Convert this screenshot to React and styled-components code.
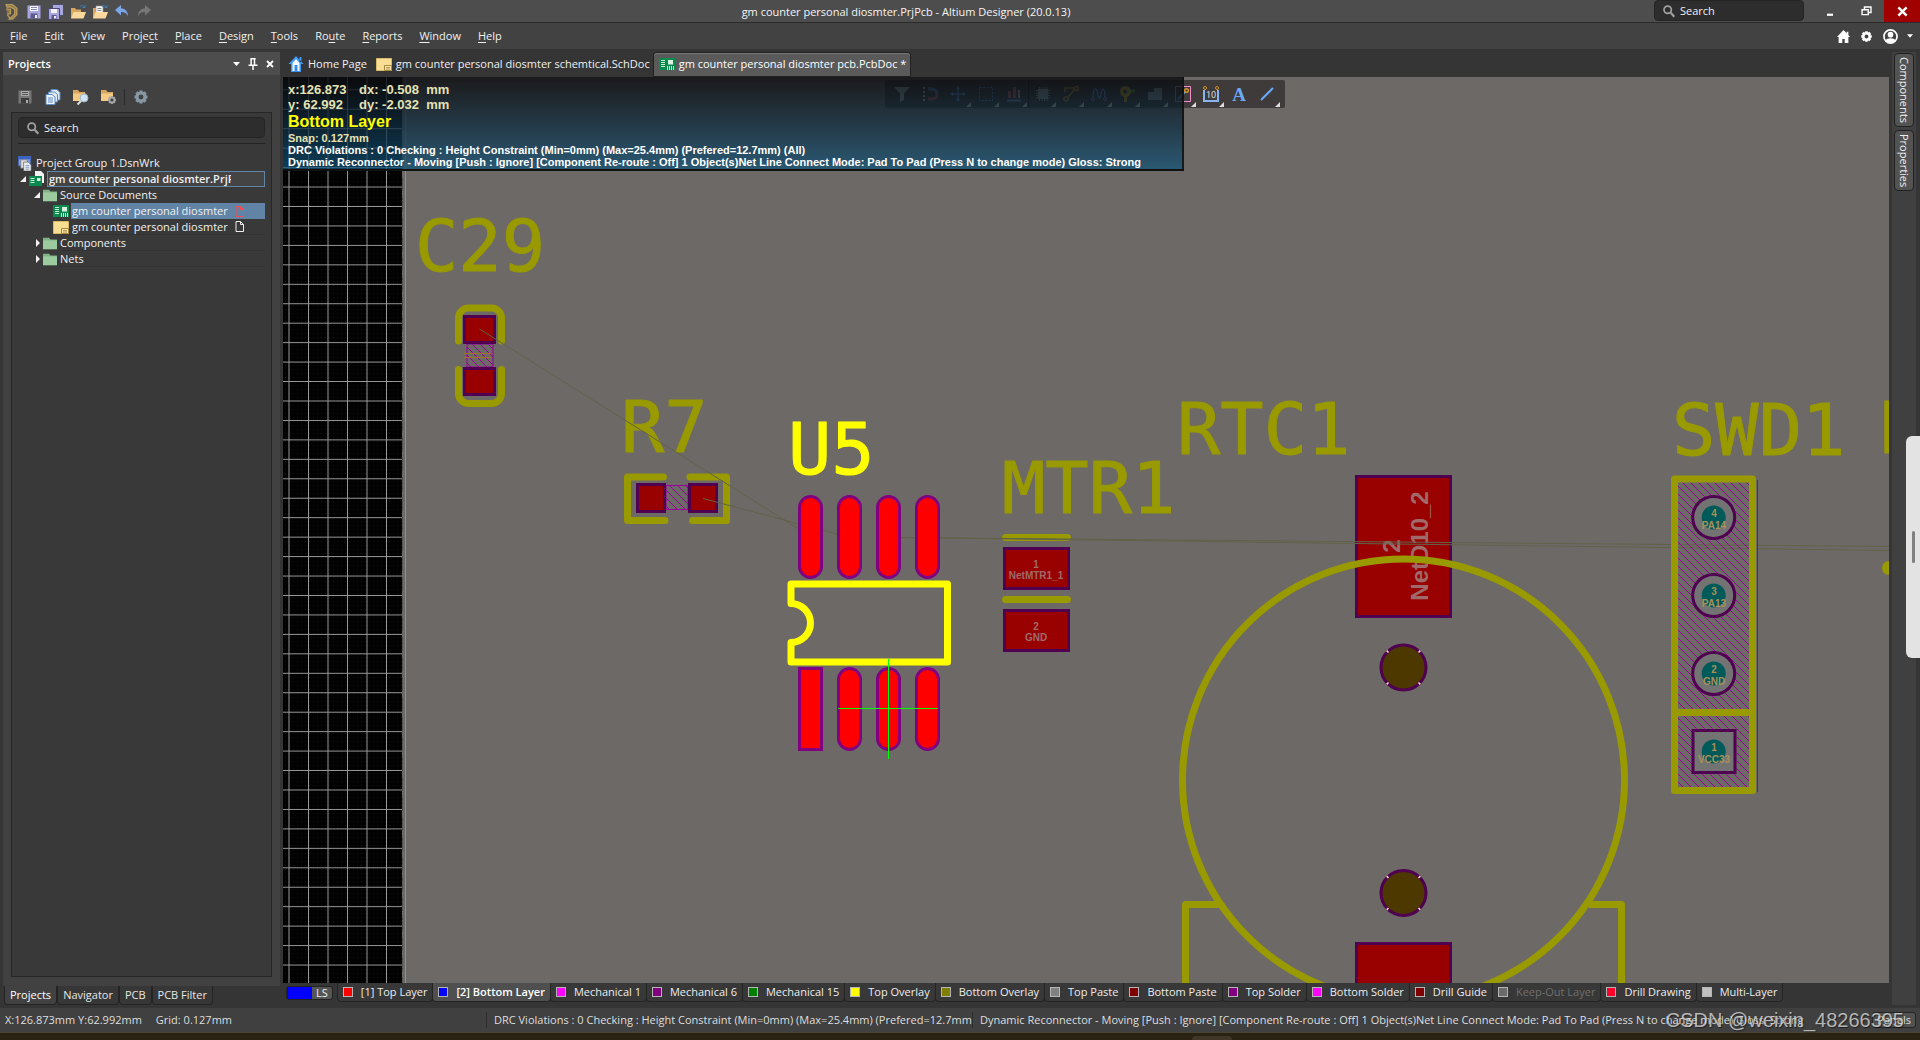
import React from "react";
import styled, { createGlobalStyle, css } from "styled-components";

const UI = `"Open Sans", "Noto Sans", sans-serif`;
const ARIAL = `"Liberation Sans", Arial, sans-serif`;
const OLIVE = "#999900";

const Global = createGlobalStyle`
  *, *::before, *::after { box-sizing: border-box; }
  body { margin: 0; background: #353535; color: #f0f0f0; font: 11px/16px ${UI}; overflow: hidden; }
  button, input { font: inherit; color: inherit; margin: 0; }
  button { background: none; border: 0; padding: 0; white-space: nowrap; }
  ul { list-style: none; margin: 0; padding: 0; }
  svg { display: block; flex: none; }
`;

/* ---------- shell ---------- */
const Shell = styled.div`
  position: relative;
  display: grid;
  grid-template-rows: 23px 26px minmax(0, 1fr) 25px 7px;
  height: 100vh;
`;
const TitleBar = styled.header`
  display: grid;
  grid-template-columns: 1fr auto 1fr;
  background: #4d4d4d;
  border-bottom: 1px solid #2b2b2b;
`;
const QuickBar = styled.div`
  display: flex;
  align-items: center;
  gap: 6px;
  padding-left: 3px;
`;
const IconButton = styled.button`
  display: grid;
  place-items: center;
  width: ${(p) => p.$w || 16}px;
  height: 16px;
`;
const AppTitle = styled.h1`
  margin: 0;
  font-size: 11px;
  font-weight: 400;
  line-height: 23px;
  color: #f4f4f4;
  padding-right: 108px;
`;
const TitleRight = styled.div`
  display: flex;
  justify-content: flex-end;
  > label { margin-right: 8px; }
`;
const SearchField = styled.label`
  display: flex;
  align-items: center;
  gap: 4px;
  width: ${(p) => p.$width};
  height: 21px;
  padding: 0 7px;
  background: #2d2d2d;
  border: 1px solid #252525;
  border-radius: 4px;
  input {
    flex: 1;
    min-width: 0;
    padding: 0;
    border: 0;
    outline: 0;
    background: none;
    &::placeholder { color: #f0f0f0; opacity: 1; }
  }
`;
const WindowButton = styled.button`
  display: grid;
  place-items: center;
  width: 36px;
  height: 22px;
  ${(p) => p.$close && css`background: #a00000;`}
`;
const MenuBar = styled.nav`
  display: flex;
  align-items: center;
  background: #424242;
  padding: 0 7px 0 10px;
`;
const Menus = styled.ul`
  display: flex;
  gap: 17px;
  flex: 1;
  u { text-underline-offset: 2px; }
`;
const AccountTools = styled.div`
  display: flex;
  align-items: center;
  gap: 7px;
`;
const Workspace = styled.div`
  display: grid;
  grid-template-columns: 277px minmax(0, 1fr) 24px;
  padding: 3px 4px 0 3px;
`;

/* ---------- projects panel ---------- */
const SideColumn = styled.aside`
  display: flex;
  flex-direction: column;
  min-height: 0;
`;
const Panel = styled.section`
  flex: 1;
  min-height: 0;
  display: flex;
  flex-direction: column;
  background: #414141;
`;
const PanelHeader = styled.div`
  display: flex;
  align-items: center;
  gap: 5px;
  height: 23px;
  padding: 0 5px;
  background: #4d4d4d;
  h2 { flex: 1; margin: 0; font-size: 11px; font-weight: 600; color: #fff; }
`;
const PanelTools = styled.div`
  display: flex;
  align-items: center;
  gap: 12px;
  height: 37px;
  padding: 7px 14px 0;
`;
const Divider = styled.span`
  width: 1px;
  height: 16px;
  margin: 0 -4px 0 -5px;
  background: #2a2a2a;
`;
const TreeBox = styled.div`
  flex: 1;
  margin: 0 8px 9px;
  padding: 4px 6px;
  background: #393939;
  border: 1px solid #262626;
`;
const Tree = styled.ul`
  margin-top: 5px;
  padding-top: 11px;
  border-top: 1px solid #232323;
`;
const Row = styled.li`
  display: flex;
  align-items: center;
  height: 16px;
  gap: 2px;
  padding-left: ${(p) => p.$indent}px;
`;
const RowName = styled.span`
  flex: 1;
  min-width: 0;
  height: 16px;
  display: flex;
  align-items: center;
  gap: 6px;
  padding-left: 1px;
  font-weight: ${(p) => (p.$bold ? 600 : 400)};
  ${(p) => p.$line && css`border-bottom: 1px solid #323232;`}
  ${(p) => p.$boxed && css`background: #444; border: 1px solid #6284a5; line-height: 14px;`}
  ${(p) => p.$selected && css`background: #6183a5;`}
`;
const Clip = styled.span`
  width: ${(p) => p.$w}px;
  overflow: hidden;
  white-space: nowrap;
`;
const PanelTabs = styled.div`
  display: flex;
  height: 22px;
  align-items: flex-start;
  padding-left: 1px;
`;
const PanelTab = styled.button`
  height: 19px;
  padding: 0 5px;
  border: 1px solid #242424;
  border-top: 0;
  border-radius: 0 0 4px 4px;
  background: ${(p) => (p.$active ? "#414141" : "#373737")};
  color: ${(p) => (p.$active ? "#fff" : "#e6e6e6")};
`;

/* ---------- editor ---------- */
const Editor = styled.main`
  display: flex;
  flex-direction: column;
  min-width: 0;
  min-height: 0;
  padding: 0 3px;
`;
const DocTabs = styled.div`
  display: flex;
  height: 25px;
  padding: 1px 0;
`;
const DocTab = styled.button`
  display: flex;
  align-items: center;
  gap: 4px;
  padding: 0 4px 1px 5px;
  border-radius: 3px 3px 0 0;
  ${(p) => p.$active && css`background: #5a5a5a; box-shadow: inset 0 1px #777, 0 0 0 1px #222; color: #fff;`}
`;
const Canvas = styled.div`
  position: relative;
  flex: 1;
  min-height: 0;
  overflow: hidden;
  background: #6d6967;
`;
const Board = styled.svg`
  width: 100%;
  height: 100%;
`;
const ActiveBar = styled.div`
  position: absolute;
  top: 3px;
  left: 602px;
  display: flex;
  padding: 0 4px 0 3px;
  background: rgba(56, 54, 53, 0.9);
  border-radius: 2px;
`;
const ToolButton = styled.button`
  position: relative;
  display: grid;
  place-items: center;
  width: 28px;
  height: 28px;
  ${(p) => p.$group && css`margin-left: 1px; box-shadow: -1px 0 #222;`}
  ${(p) => p.$menu && css`
    &::after {
      content: "";
      position: absolute;
      right: 1px;
      bottom: 1px;
      border-left: 5px solid transparent;
      border-bottom: 5px solid #ddd;
    }
  `}
`;
const HeadsUp = styled.div`
  position: absolute;
  top: 0;
  left: 0;
  width: 901px;
  padding: 5px 5px 1px;
  background: linear-gradient(rgba(12, 12, 14, 0.85), rgba(15, 42, 60, 0.78) 50%, rgba(18, 82, 118, 0.74));
  border: solid rgba(16, 16, 16, 0.85);
  border-width: 0 2px 2px 0;
  font-family: ${ARIAL};
  font-weight: 700;
  color: #fff;
  white-space: nowrap;
`;
const Coords = styled.dl`
  display: grid;
  grid-template-columns: 71px auto;
  justify-content: start;
  margin: 0;
  font-size: 13px;
  line-height: 15px;
  color: #e6e2b4;
  dd { margin: 0; }
`;
const HudLine = styled.div`
  font-size: ${(p) => p.$size || 11}px;
  line-height: ${(p) => p.$lh || 12}px;
  color: ${(p) => p.$color || "#fff"};
`;
const LayerBar = styled.div`
  display: flex;
  height: 25px;
  align-items: flex-start;
  padding-left: 3px;
`;
const LayerSet = styled.button`
  display: flex;
  align-items: center;
  height: 14px;
  margin: 3px 5px 0 0;
  padding-right: 4px;
  gap: 4px;
  border: 1px solid #222;
  border-radius: 3px;
  background: #555;
  line-height: 14px;
  &::before { content: ""; width: 25px; height: 12px; background: #0000ff; }
`;
const LayerTab = styled.button`
  display: flex;
  align-items: center;
  gap: 8px;
  height: 19px;
  margin-left: -1px;
  padding: 0 5px 1px;
  border: 1px solid #242424;
  border-top: 0;
  border-radius: 0 0 4px 4px;
  background: ${(p) => (p.$active ? "#4f4f4f" : "#383838")};
  font-weight: ${(p) => (p.$active ? 600 : 400)};
  color: ${(p) => (p.$active ? "#fff" : p.$off ? "#6f6f6f" : "#ececec")};
  &::before {
    content: "";
    width: 10px;
    height: 10px;
    background: ${(p) => p.$color};
    border: 1px solid #b5b5b5;
  }
`;
const Dock = styled.div`
  display: flex;
  flex-direction: column;
  gap: 3px;
  align-items: center;
  margin-bottom: 3px;
  padding-top: 1px;
  background: #404040;
`;
const DockTab = styled.button`
  writing-mode: vertical-rl;
  width: 20px;
  padding: 3px 0;
  line-height: 18px;
  background: #535353;
  border: 1px solid #212121;
  border-radius: 4px;
`;
const DrawerHandle = styled.button`
  position: absolute;
  right: 0;
  top: 436px;
  width: 14px;
  height: 222px;
  display: grid;
  place-items: center;
  background: #e3e3e3;
  border-radius: 6px 0 0 6px;
  &::before { content: ""; width: 3px; height: 32px; border-radius: 2px; background: #808080; }
`;

/* ---------- status ---------- */
const StatusBar = styled.footer`
  display: flex;
  align-items: center;
  padding: 0 4px 0 5px;
  background: #404040;
  border-bottom: 1px solid #4a4433;
  white-space: nowrap;
  color: #dedede;
`;
const StatusCell = styled.div`
  overflow: hidden;
  flex: ${(p) => (p.$w ? `0 0 ${p.$w}px` : 1)};
  ${(p) => p.$ruled && css`border-left: 1px solid #2e2e2e; padding-left: 7px;`}
  span + span { margin-left: 14px; }
`;
const PanelsButton = styled.button`
  height: 16px;
  padding: 0 4px;
  line-height: 14px;
  background: #525252;
  border: 1px solid #252525;
  border-radius: 3px;
`;
const DeskStrip = styled.div`
  display: flex;
  justify-content: center;
  align-items: flex-end;
  background: #2a2314;
  padding-left: 504px;
  &::before { content: ""; width: 40px; height: 4px; border-radius: 4px 4px 0 0; background: #403726; }
`;
const Watermark = styled.div`
  position: absolute;
  right: 16px;
  bottom: 8px;
  font: 20px/24px ${ARIAL};
  color: rgba(225, 225, 225, 0.75);
  text-shadow: 1px 1px 1px rgba(0, 0, 0, 0.5);
  pointer-events: none;
`;

/* ---------- icons ---------- */
const I = ({ s = 16, children }) => (
  <svg width={s} height={s} viewBox="0 0 16 16" fill="none" aria-hidden="true">{children}</svg>
);
const Logo = () => (
  <I s={17}>
    <path d="M3 1.5h6L13 5v6l-4 4H6l5-4.5V6L7 3.500 4 4zM3 5.500 7 6v4l-3 .5M4 11l3 4" stroke="#b89a5c" strokeWidth="1.3" fill="#8c7544" />
  </I>
);
const Save = () => (
  <I><path d="M1.5 1.5h13v13h-13z" fill="#a9a5dd" /><path d="M4 2h8v5H4z" fill="#f3f3f8" /><path d="M5 3.5h6M5 5.5h6" stroke="#8b8bb0" /><path d="M4.5 9.5h7v5h-7z" fill="#5b5990" /><path d="M9 11h2v3H9z" fill="#eee" /></I>
);
const SaveGray = () => (
  <I><path d="M1.5 1.5h13v13h-13z" fill="#777" /><path d="M4 2h8v5H4z" fill="#aaa" /><path d="M5 3.5h6M5 5.5h6" stroke="#555" /><path d="M4 9h8v5.5H4z" fill="#3c3c3c" /><path d="M9 11h2v3H9z" fill="#aaa" /></I>
);
const SaveAll = () => (
  <I><path d="M4.5.5h11v11h-11z" fill="#a9a5dd" stroke="#4d4d6b" /><path d="M.5 4.5h11v11H.5z" fill="#a9a5dd" stroke="#4a4870" /><path d="M3 5h6v4H3z" fill="#f3f3f8" /><path d="M3.5 11h5v4h-5z" fill="#5b5990" /><path d="M6 12h2v2.5H6z" fill="#eee" /></I>
);
const OpenFolder = ({ docs }) => (
  <I>
    <path d="M1 14V4h4l1 1.5h5V14z" fill="#d8a860" />
    {docs && <path d="M4 2h7v8H4z" fill="#f5f5f5" stroke="#999" strokeWidth=".6" />}
    {docs && <path d="M5.5 4.5h4M5.5 6.5h4" stroke="#888" />}
    <path d="M3.5 8H16l-2.5 6.5H1z" fill="#fbd89c" />
    <path d="M10 3c1-2 3-2 4 0m1-2v2.5h-2.5" stroke="#3d7fb8" />
  </I>
);
const Undo = () => (
  <I><path d="M7 1v3.2c4.5.3 7 3.3 7 8.3-1.5-3.5-3.5-4.5-7-4.5v3.500L1 6z" fill="#7aa7e8" /></I>
);
const Redo = () => (
  <I><path d="M9 1v3.2c-4.5.3-7 3.3-7 8.3 1.5-3.5 3.5-4.5 7-4.5v3.500L15 6z" fill="#777" /></I>
);
const Search = () => (
  <I s={14}><circle cx="6.5" cy="6.5" r="4.2" stroke="#a0a0a0" strokeWidth="2" /><path d="m10 10 4 4.5" stroke="#a0a0a0" strokeWidth="2.4" /></I>
);
const HomeTab = () => (
  <I><path d="M11.5 1h2v5h-2zM8 0 .5 8H3v8h10V8h2.5z" fill="#4096f0" /><path d="M8 3 4.500 7v8h7V7z" fill="#eef6ff" /><path d="M6.5 9h3v7h-3z" fill="#3d8de8" /></I>
);
const Sch = () => (
  <I><path d="M.5 2.5h15v12H.5z" fill="#f7de92" stroke="#d9b968" /><path d="M8.5 9.5h7v5h-7z" fill="#fbe7a8" stroke="#a8863c" /><path d="M10 11.5h4M10 13h4" stroke="#a8863c" strokeWidth=".8" /></I>
);
const Pcb = () => (
  <I><path d="M0 2h16v12H0z" fill="#0b8a4f" /><path d="M2 4.5h4M2 6.5h4M2 8.5h4M2 10.5h4" stroke="#c9efd5" /><path d="M9 4h5v4.5H9z" fill="#d8f3df" /><path d="M8.5 10v4M10.5 10v4M12.5 10v4M14.5 10v4" stroke="#c9efd5" /></I>
);
const PcbProject = () => (
  <I><path d="M6 0h6l3 3v9H6z" fill="#f2f2f2" /><path d="M0 5h13v10H0z" fill="#0b8a4f" /><path d="M1.5 7.5h4M1.5 9.5h4M1.5 11.5h4" stroke="#c9efd5" /><path d="M8 7h3.5v3H8z" fill="#d8f3df" /></I>
);
const Folder = () => (
  <I s={14}><path d="M0 2h7l1.5 2H16v11H0z" fill="#7fb386" /><path d="M0 5h16v10H0z" fill="#9bcb9f" /></I>
);
const Group = () => (
  <I s={15}><path d="M.5.5h13v10H.5z" fill="#7f9fd8" stroke="#4466b8" /><path d="M.5.5h13v3H.5z" fill="#3a63c8" /><path d="M3 4h7v9H3z" fill="#ddd" stroke="#777" strokeWidth=".7" /><path d="M6 6.5h5l3 3V16H6z" fill="#eee" stroke="#555" strokeWidth=".7" /><path d="M8 10h4M8 12h4M8 14h4" stroke="#5a80c0" strokeWidth=".8" /></I>
);
const Doc = ({ c }) => (
  <svg width="9" height="11" viewBox="0 0 9 11" fill="none" aria-hidden="true"><path d="M1 .5h4.500l3 3v7H1zM5.500.5v3h3" stroke={c} /></svg>
);
const Arrow = ({ open }) => (
  <svg width="7" height="8" viewBox="0 0 7 8" aria-hidden="true"><path d={open ? "M6 1v6H0z" : "M2 0l4 4-4 4z"} fill="#f2f2f2" /></svg>
);
const Copies = () => (
  <I><path d="M6 .5h6l3 3V11H6z" fill="#dfe9f5" stroke="#5b8ac4" /><path d="M3.5 3h6l3 2.500V13h-9z" fill="#dfe9f5" stroke="#5b8ac4" /><path d="M1 5.5h6L10 8v7.500H1z" fill="#eef4fb" stroke="#5b8ac4" /><path d="M3 9h5M3 11h5M3 13h5" stroke="#5b8ac4" /></I>
);
const FolderFind = () => (
  <I><path d="M0 1h5l1.5 2H12v9H0z" fill="#d9a860" /><path d="M0 4.5h13V12H0z" fill="#f3cb84" /><circle cx="11" cy="9" r="4" fill="#cfe3f4" stroke="#9bb4c8" /><path d="m8 12-3.5 3.5" stroke="#ddd" strokeWidth="2" /></I>
);
const teeth = "M8 1.5v13M1.5 8h13M3.4 3.4l9.2 9.2M12.6 3.4l-9.2 9.2";
const FolderGear = () => (
  <I><path d="M0 1h5l1.5 2H12v9H0z" fill="#d9a860" /><path d="M0 4.5h12V12H0z" fill="#f3cb84" /><g transform="translate(6 6) scale(.62)"><path d={teeth} stroke="#999" strokeWidth="3.2" /><circle cx="8" cy="8" r="4" fill="#3d3d3d" stroke="#aaa" strokeWidth="3" /></g></I>
);
const Gear = ({ s, color, hole }) => (
  <I s={s}><path d={teeth} stroke={color} strokeWidth="3.2" /><circle cx="8" cy="8" r="4" fill={hole} stroke={color} strokeWidth="3.2" /></I>
);
const HomeWhite = () => (
  <I s={13}><path d="M8 0 0 8.500h2V16h4.500v-5h3v5H14V8.500h2L14 6V2h-2v2z" fill="#fff" /></I>
);
const User = () => (
  <I s={15}><circle cx="8" cy="8" r="7" stroke="#fff" strokeWidth="1.8" /><circle cx="8" cy="6" r="3" fill="#fff" /><path d="M2.5 12c2-3 9-3 11 0L11 14.500H5z" fill="#fff" /></I>
);
const Caret = ({ w }) => (
  <svg width={w} height="6" viewBox="0 0 10 6" aria-hidden="true"><path d="M0 0h10L5 6z" fill="#fff" /></svg>
);
const Pin = () => (<I s={12}><path d="M4.5 1h7M5.5 1v8M10 1v8M2 9.5h12M8 10v6" stroke="#fff" strokeWidth="2" /></I>);
const Cross = ({ s }) => (<I s={s}><path d="m2 2 12 12M14 2 2 14" stroke="#fff" strokeWidth="3.6" /></I>);

const blue = "#5b9bea";
const tools = [
  ["Filter", false, <path d="M0 1h16l-6 6.500V14l-4 2V7.500z" fill="#a9b9c4" />],
  ["Snapping", false, <><path d="M6 3h4a5 5 0 0 1 0 10H6" stroke="#c45a60" strokeWidth="3" /><path d="M6 3h4a5 5 0 0 1 5 5" stroke="#5a80c8" strokeWidth="3" /><path d="M1 2h2M1 6h2M1 10h2M1 14h2" stroke="#ccc" strokeWidth="2" /></>],
  ["Move", true, <path d="M8 1v14M1 8h14M6.500 3 8 1l1.500 2M6.500 13 8 15l1.500-2M3 6.500 1 8l2 1.500M13 6.500 15 8l-2 1.500" stroke={blue} strokeWidth="1.300" />],
  ["Select", true, <path d="M1.5 1.5h13v13h-13z" stroke={blue} strokeDasharray="2 1.5" />],
  ["Align", true, <><path d="M2 5h3v7H2zM7 1h3v11H7z" fill="#c9666c" /><path d="M12 4h2v8h-2z" fill="#bbb" /><path d="M1 14.5h14" stroke="#7ba0d8" strokeWidth="2" /></>],
  ["Component", true, <><path d="M3 3h10v10H3z" fill="#9fb0b8" /><path d="M1 4.5h14M1 7h14M1 9.5h14M1 12h14M4.5 1v14M7 1v14M9.5 1v14M12 1v14" stroke="#9fb0b8" /></>],
  ["Route", true, <><path d="M2 6V2h9M4 12l8-9" stroke="#c79a28" strokeWidth="1.600" /><circle cx="3" cy="13" r="2" stroke="#c79a28" strokeWidth="1.500" /><circle cx="13.5" cy="2.5" r="2" stroke="#c79a28" strokeWidth="1.500" /></>],
  ["Tune", true, <><path d="M2 12C2 1 6 1 6.500 7s3 7 3.500 1 4-8 4 3" stroke={blue} strokeWidth="1.500" /><circle cx="2" cy="13" r="1.5" stroke="#a08ad0" /><circle cx="14" cy="13" r="1.5" stroke="#a08ad0" /></>],
  ["Via", true, <><path d="M7 5h9" stroke="#58a840" strokeWidth="3" /><circle cx="6.500" cy="5.5" r="3.8" stroke="#d8a820" strokeWidth="3.400" /><path d="M5 10h3v6H5z" fill="#d8a820" /></>],
  ["Polygon", true, <path d="M1 6h6V2h8v12H1z" fill="#93a8b4" />],
  ["Rule", true, <><path d="M.5.5h15v15H.5z" stroke="#f08fd0" /><path d="m3 13 7-7" stroke={blue} strokeWidth="1.800" /><circle cx="11.5" cy="4.5" r="1.8" stroke="#d09020" strokeWidth="1.500" /></>],
  ["Dimension", true, <><path d="M1 4v11h14V4" stroke="#8ab4f0" strokeWidth="2" /><circle cx="2" cy="2" r="1.5" stroke="#d09020" /><circle cx="14" cy="2" r="1.5" stroke="#d09020" /><text x="8" y="12" textAnchor="middle" fontSize="9" fill="#ddd" fontFamily="Roboto, sans-serif">10</text></>],
  ["Text", false, <text x="8" y="15" textAnchor="middle" fontSize="19" fontWeight="700" fill="#6aa8f8" fontFamily="Liberation Serif, serif">A</text>],
  ["Line", true, <path d="M2 14 14 2" stroke="#6aa8f8" strokeWidth="2" />],
];

/* ---------- board drawing ---------- */
const Silk = styled.text`
  font: 72px "DejaVu Sans Mono", monospace;
  fill: ${(p) => p.$color || OLIVE};
  stroke: ${(p) => p.$color || OLIVE};
  stroke-linejoin: round;
`;
const PadText = styled.text`
  font-family: ${ARIAL};
  font-weight: 700;
  font-size: ${(p) => p.$size || 10}px;
  text-anchor: middle;
  fill: ${(p) => p.$color || "#a06a6a"};
`;
const Pad = ({ x, y, w, h, rx = 0, hot }) => (
  <rect x={x + 1.5} y={y + 1.5} width={w - 3} height={h - 3} rx={rx} strokeWidth="3"
    fill={hot ? "#ff0000" : "#990000"} stroke={hot ? "#800080" : "#500050"} />
);
const headerPins = [[517.5, "4", "PA14"], [595.5, "3", "PA13"], [673.5, "2", "GND"], [751.5, "1", "VCC33"]];

/* Board coordinates are window coordinates; the group moves them to the canvas origin. */
const BoardDrawing = () => (
  <Board role="img" aria-label="Board layout">
    <defs>
      <pattern id="dots" width="4" height="4" patternUnits="userSpaceOnUse"><rect x="1" y="1" width="1" height="1" fill="#161616" /></pattern>
      <pattern id="grid" x="288.5" y="89.3" width="19.5" height="19.45" patternUnits="userSpaceOnUse"><path d="M.5 0v20M0 .5h20" stroke="#9a9a9a" /></pattern>
      <pattern id="hatch" width="8" height="8" patternUnits="userSpaceOnUse"><path d="M-1-1l10 10M-1 7l2 2M7-1l2 2" stroke="#990099" /></pattern>
    </defs>
    <g transform="translate(-283 -77)" fill="none">
      <rect x="283" y="77" width="119" height="2000" fill="#000" />
      <rect x="283" y="77" width="119" height="2000" fill="url(#dots)" />
      <rect x="283" y="77" width="119" height="2000" fill="url(#grid)" />
      <path d="M402.500 77v2000" stroke="#55524f" strokeDasharray="14 6" />
      <path d="M405.500 77v2000" stroke="#928c95" />

      <Silk x="415" y="271">C29</Silk>
      <Silk x="621" y="452">R7</Silk>
      <Silk x="788" y="474" $color="#ffff00">U5</Silk>
      <Silk x="1002" y="513">MTR1</Silk>
      <Silk x="1177" y="454">RTC1</Silk>
      <Silk x="1672" y="455">SWD1</Silk>
      <Silk x="1880" y="453">D</Silk>

      <g stroke={OLIVE} strokeWidth="7" strokeLinecap="round" strokeLinejoin="round">
        <path d="M458.500 341v-23a10 10 0 0 1 10-10h23a10 10 0 0 1 10 10v23M458.500 369.500v24a10 10 0 0 0 10 10h23a10 10 0 0 0 10-10v-24" />
        <path d="M663.500 477h-36v43.500H665M690 477h36.500v43.500h-34" />
        <path d="M1005.500 537.500h62M1005.500 599.500h62" />
      </g>

      <rect x="467" y="344" width="26" height="23" fill="url(#hatch)" stroke="#990099" />
      <rect x="666" y="485.500" width="22" height="24" fill="url(#hatch)" stroke="#990099" />
      <path d="M464 353.500h27M464 357.500h27" stroke="#9a7a20" />
      <Pad x={463} y={315} w={33} h={29} />
      <Pad x={463} y={367} w={33} h={29} />
      <Pad x={636} y={483} w={30} h={30} />
      <Pad x={688} y={483} w={30} h={30} />

      <Pad x={1003} y={547} w={67} h={43} />
      <PadText x="1036" y="568">1</PadText>
      <PadText x="1036" y="579">NetMTR1_1</PadText>
      <Pad x={1003} y={609} w={67} h={43} />
      <PadText x="1036" y="630">2</PadText>
      <PadText x="1036" y="641">GND</PadText>

      <Pad x={1355} y={475} w={97} h={143} />
      <Pad x={1355} y={942} w={97} h={143} />
      <g transform="rotate(-90 1403 546)">
        <PadText $size={24} x="1403" y="543">2</PadText>
        <PadText $size={24} x="1403" y="571">NetD10_2</PadText>
      </g>

      <path stroke="#62624a" d="M479.500 329 798 528.500M703 498.500 837 534M901 537.500 1889 546.500M901 537.500 1889 550.500" />

      <circle cx="1403.500" cy="780" r="221" stroke={OLIVE} strokeWidth="7" />
      <path d="M1219 904.500h-33.500V1200M1589 904.500h32.500V1200" stroke={OLIVE} strokeWidth="7" strokeLinejoin="round" />
      {[667.5, 893].map((cy) => (
        <g key={cy}>
          <circle cx="1403.500" cy={cy} r="22.5" fill="#4d3900" stroke="#500050" strokeWidth="3" />
          <circle cx="1403.500" cy={cy} r="22.5" stroke="#f0dcc0" strokeWidth="2.5" pathLength="360" strokeDasharray="4 86" strokeDashoffset="-43" />
        </g>
      ))}

      <g>
        {[495, 667].map((y) =>
          [798, 837, 876, 915].map((x, i) => (
            <Pad key={`${x}-${y}`} hot x={x} y={y} w={25} h={84} rx={y === 667 && i === 0 ? 0 : 11} />
          ))
        )}
        <path d="M791 603.500V584h156.500v78H791v-19.500a19.500 19.500 0 0 0 0-39z" stroke="none" />
        <path d="M791 603.500V584h156.500v78H791v-19.500a19.500 19.500 0 0 0 0-39" stroke="#ffff00" strokeWidth="7" strokeLinejoin="round" strokeLinecap="round" />
        <path d="M838 708.500h100M888.500 659v100" stroke="#00ff00" />
      </g>

      <rect x="1675" y="479" width="78" height="312" fill="url(#hatch)" />
      <path d="M1757.500 480v312" stroke="#990099" />
      <path d="M1674.500 479h78v311.500h-78zM1674.500 712.500h78" stroke={OLIVE} strokeWidth="7" strokeLinejoin="round" />
      {headerPins.map(([y, n, net]) => (
        <g key={n}>
          {n === "1"
            ? <rect x="1693" y={y - 21} width="42" height="42" fill="#737373" stroke="#500050" strokeWidth="3" />
            : <circle cx="1713.700" cy={y} r="21" fill="#737373" stroke="#500050" strokeWidth="3" />}
          <circle cx="1713.700" cy={y} r="12" fill="#005a5a" />
          <PadText $color="#a8905a" x="1714" y={y - 1}>{n}</PadText>
          <PadText $color="#a8905a" x="1714" y={y + 11}>{net}</PadText>
        </g>
      ))}
      <circle cx="1889" cy="568" r="7" fill={OLIVE} />
    </g>
  </Board>
);

/* ---------- data ---------- */
const menus = [["", "F", "ile"], ["", "E", "dit"], ["", "V", "iew"], ["Proje", "c", "t"], ["", "P", "lace"], ["", "D", "esign"], ["", "T", "ools"], ["Ro", "u", "te"], ["", "R", "eports"], ["", "W", "indow"], ["", "H", "elp"]];
const layers = [
  ["[1] Top Layer", "#ff0000"], ["[2] Bottom Layer", "#0000ff"], ["Mechanical 1", "#ff00ff"], ["Mechanical 6", "#800080"],
  ["Mechanical 15", "#008000"], ["Top Overlay", "#ffff00"], ["Bottom Overlay", "#808000"], ["Top Paste", "#808080"],
  ["Bottom Paste", "#800000"], ["Top Solder", "#800080"], ["Bottom Solder", "#ff00ff"], ["Drill Guide", "#800000"],
  ["Keep-Out Layer", "#6b6b6b"], ["Drill Drawing", "#ff002a"], ["Multi-Layer", "#c0c0c0"],
];

export default function App() {
  return (
    <Shell>
      <Global />
      <TitleBar>
        <QuickBar>
          <Logo />
          <IconButton aria-label="Save"><Save /></IconButton>
          <IconButton aria-label="Save all"><SaveAll /></IconButton>
          <IconButton aria-label="Open"><OpenFolder /></IconButton>
          <IconButton aria-label="Open project"><OpenFolder docs /></IconButton>
          <IconButton aria-label="Undo"><Undo /></IconButton>
          <IconButton aria-label="Redo"><Redo /></IconButton>
        </QuickBar>
        <AppTitle>gm counter personal diosmter.PrjPcb - Altium Designer (20.0.13)</AppTitle>
        <TitleRight>
          <SearchField $width="150px"><Search /><input aria-label="Search commands" placeholder="Search" /></SearchField>
          <WindowButton aria-label="Minimize"><I s={12}><path d="M4 13h8" stroke="#fff" strokeWidth="3" /></I></WindowButton>
          <WindowButton aria-label="Restore"><I s={11}><path d="M5 5V1.500h9.500v8H11M1.500 5.500h9v7h-9z" stroke="#fff" strokeWidth="2" /></I></WindowButton>
          <WindowButton aria-label="Close" $close><Cross s={11} /></WindowButton>
        </TitleRight>
      </TitleBar>

      <MenuBar>
        <Menus>
          {menus.map(([a, u, b]) => <li key={a + u + b}><button>{a}<u>{u}</u>{b}</button></li>)}
        </Menus>
        <AccountTools>
          <IconButton aria-label="Home"><HomeWhite /></IconButton>
          <IconButton aria-label="Preferences"><Gear s={13} color="#fff" hole="#424242" /></IconButton>
          <IconButton $w={19} aria-label="Account"><User /></IconButton>
          <Caret w={6} />
        </AccountTools>
      </MenuBar>

      <Workspace>
        <SideColumn>
          <Panel>
            <PanelHeader>
              <h2>Projects</h2>
              <IconButton $w={10} aria-label="Panel menu"><Caret w={7} /></IconButton>
              <IconButton $w={14} aria-label="Pin"><Pin /></IconButton>
              <IconButton $w={10} aria-label="Close panel"><Cross s={8} /></IconButton>
            </PanelHeader>
            <PanelTools>
              <IconButton aria-label="Save project"><SaveGray /></IconButton>
              <IconButton aria-label="Documents"><Copies /></IconButton>
              <IconButton aria-label="Explore"><FolderFind /></IconButton>
              <IconButton aria-label="Project options"><FolderGear /></IconButton>
              <Divider />
              <IconButton aria-label="Settings"><Gear s={16} color="#8798a5" hole="#414141" /></IconButton>
            </PanelTools>
            <TreeBox>
              <SearchField $width="100%"><Search /><input aria-label="Search projects" placeholder="Search" /></SearchField>
              <Tree>
                <Row $indent={0}><Group /><RowName>Project Group 1.DsnWrk</RowName></Row>
                <Row $indent={2}><Arrow open /><PcbProject /><RowName $bold $boxed><Clip $w={182}>gm counter personal diosmter.PrjPcb</Clip></RowName></Row>
                <Row $indent={16}><Arrow open /><Folder /><RowName>Source Documents</RowName></Row>
                <Row $indent={35}><Pcb /><RowName $selected><Clip $w={157}>gm counter personal diosmter</Clip><Doc c="#ff4a4a" /></RowName></Row>
                <Row $indent={35}><Sch /><RowName $line><Clip $w={157}>gm counter personal diosmter</Clip><Doc c="#eee" /></RowName></Row>
                <Row $indent={16}><Arrow /><Folder /><RowName $line>Components</RowName></Row>
                <Row $indent={16}><Arrow /><Folder /><RowName $line>Nets</RowName></Row>
              </Tree>
            </TreeBox>
          </Panel>
          <PanelTabs>
            {["Projects", "Navigator", "PCB", "PCB Filter"].map((t, i) => <PanelTab key={t} $active={i === 0}>{t}</PanelTab>)}
          </PanelTabs>
        </SideColumn>

        <Editor>
          <DocTabs>
            <DocTab><HomeTab />Home Page</DocTab>
            <DocTab><Sch />gm counter personal diosmter schemtical.SchDoc</DocTab>
            <DocTab $active><Pcb />gm counter personal diosmter pcb.PcbDoc *</DocTab>
          </DocTabs>
          <Canvas>
            <BoardDrawing />
            <ActiveBar>
              {tools.map(([name, menu, art]) => (
                <ToolButton key={name} aria-label={name} $menu={menu} $group={name === "Component"}><I>{art}</I></ToolButton>
              ))}
            </ActiveBar>
            <HeadsUp>
              <Coords>
                <dt>x:126.873</dt><dd>dx: -0.508 &nbsp;mm</dd>
                <dt>y: 62.992</dt><dd>dy: -2.032 &nbsp;mm</dd>
              </Coords>
              <HudLine $size={16} $lh={20} $color="#ffff00">Bottom Layer</HudLine>
              <HudLine $color="#e6e2b4">Snap: 0.127mm</HudLine>
              <HudLine>DRC Violations : 0 Checking : Height Constraint (Min=0mm) (Max=25.4mm) (Prefered=12.7mm) (All)</HudLine>
              <HudLine>Dynamic Reconnector - Moving [Push : Ignore] [Component Re-route : Off] 1 Object(s)Net Line Connect Mode: Pad To Pad (Press N to change mode) Gloss: Strong</HudLine>
            </HeadsUp>
          </Canvas>
          <LayerBar>
            <LayerSet>LS</LayerSet>
            {layers.map(([name, color], i) => (
              <LayerTab key={name} $color={color} $active={i === 1} $off={name === "Keep-Out Layer"}>{name}</LayerTab>
            ))}
          </LayerBar>
        </Editor>

        <Dock>
          <DockTab>Components</DockTab>
          <DockTab>Properties</DockTab>
        </Dock>
      </Workspace>

      <StatusBar>
        <StatusCell $w={481}><span>X:126.873mm Y:62.992mm</span><span>Grid: 0.127mm</span></StatusCell>
        <StatusCell $w={486} $ruled>DRC Violations : 0 Checking : Height Constraint (Min=0mm) (Max=25.4mm) (Prefered=12.7mm</StatusCell>
        <StatusCell $ruled>Dynamic Reconnector - Moving [Push : Ignore] [Component Re-route : Off] 1 Object(s)Net Line Connect Mode: Pad To Pad (Press N to change mode) Gloss: Strong</StatusCell>
        <PanelsButton>Panels</PanelsButton>
      </StatusBar>
      <DeskStrip />
      <DrawerHandle aria-label="Open drawer" />
      <Watermark>CSDN @weixin_48266395</Watermark>
    </Shell>
  );
}
